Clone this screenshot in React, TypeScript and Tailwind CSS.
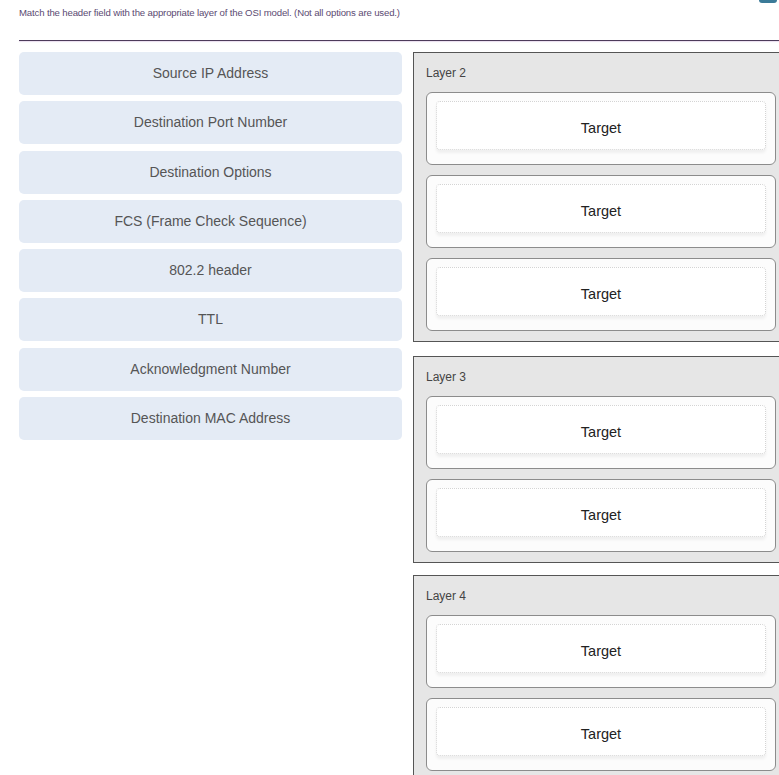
const fields = [
    'Source IP Address',
    'Destination Port Number',
    'Destination Options',
    'FCS (Frame Check Sequence)',
    '802.2 header',
    'TTL',
    'Acknowledgment Number',
    'Destination MAC Address',
];

const layers = [
    { name: 'Layer 2', targets: 3 },
    { name: 'Layer 3', targets: 2 },
    { name: 'Layer 4', targets: 2 },
];

const TargetBox = () => (
    <div className="h-[73px] shrink-0 rounded-[6px] border border-[#8c8c8c] bg-[#fcfcfc] px-[9px] pt-[8px]">
        <div className="flex h-[49px] items-center justify-center rounded-[4px] border border-dotted border-[#d4d4d4] bg-white pt-[6px] text-[14.5px] text-[#222] shadow-[0_3px_3px_rgba(0,0,0,0.05)]">
            Target
        </div>
    </div>
);

export default function App() {
    return (
        <div className="relative h-[775px] w-[779px] overflow-hidden bg-white font-['Liberation_Sans',Arial,sans-serif]">
            <div className="flex items-start justify-between pl-[19px]">
                <p className="pt-[6px] text-[9.6px] leading-[14px] tracking-[-0.15px] text-[#5b4a72]">
                    Match the header field with the appropriate layer of the OSI model. (Not all options are used.)
                </p>
                <div className="mr-[2px] h-[3px] w-[18px] rounded-b-sm bg-[#3b7a98]" />
            </div>
            <div className="ml-[19px] mt-[20px] h-[1px] bg-[#4d3b5b] shadow-[0_1px_1px_rgba(190,150,200,0.35)]" />

            <div className="mt-[11px] flex gap-[11px] pl-[19px]">
                <ul className="flex w-[383px] shrink-0 flex-col gap-[6.3px]">
                    {fields.map((f, i) => (
                        <li key={i} className="flex h-[43px] items-center justify-center rounded-[5px] bg-[#e4ebf5] text-[14px] text-[#555]">
                            {f}
                        </li>
                    ))}
                </ul>

                <div className="flex w-[376px] shrink-0 flex-col">
                    {layers.map((l, i) => (
                        <div key={i} className={`flex flex-col border border-[#555] bg-[#e6e6e6] px-[12px] pb-[10px] pt-[11px] ${i === 1 ? 'mt-[14px]' : i === 2 ? 'mt-[12px]' : ''}`}>
                            <div className="mb-[10px] h-[18px] text-[12px] leading-[18px] text-[#444]">{l.name}</div>
                            <div className="flex flex-col gap-[10px]">
                                {Array.from({ length: l.targets }).map((_, j) => (
                                    <TargetBox key={j} />
                                ))}
                            </div>
                        </div>
                    ))}
                </div>
            </div>
        </div>
    );
}
